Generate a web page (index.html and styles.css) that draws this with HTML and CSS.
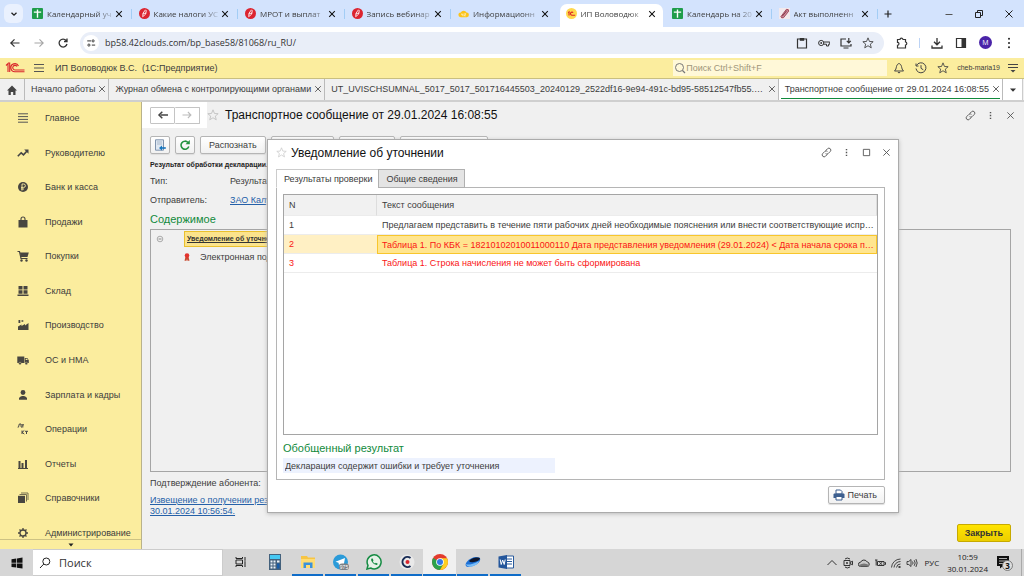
FILE: index.html
```html
<!DOCTYPE html>
<html lang="ru">
<head>
<meta charset="utf-8">
<title>ИП Воловодюк В.С. (1С:Предприятие)</title>
<link rel="stylesheet" href="styles.css">
</head>
<body>
<svg class="defs" aria-hidden="true">
  <symbol id="x" viewBox="0 0 10 10"><path d="M1.500 1.500l7 7M8.500 1.500l-7 7" fill="none" stroke="currentColor"/></symbol>
  <symbol id="star" viewBox="0 0 14 14"><path d="M7 1l1.700 4.200 4.300.3-3.300 2.800 1.100 4.300L7 10.200l-3.800 2.400 1.100-4.300L1 5.500l4.300-.3z" fill="none" stroke="currentColor"/></symbol>
  <symbol id="link" viewBox="0 0 12 12"><path d="M5.200 3.800l1.900-1.900a2 2 0 0 1 3 3L7.800 7.200a2 2 0 0 1-2.800 0M6.800 8.200l-1.900 1.900a2 2 0 0 1-3-3l2.300-2.300a2 2 0 0 1 2.800 0" fill="none" stroke="currentColor"/></symbol>
  <symbol id="dots" viewBox="0 0 10 10"><path d="M4.200 1h1.600v1.600H4.200zM4.200 4.200h1.600v1.600H4.200zM4.200 7.400h1.600V9H4.200z" fill="currentColor"/></symbol>
  <symbol id="sheet" viewBox="0 0 12 12"><rect width="12" height="12" rx="1" fill="#1f9d4b"/><path d="M6 1.500v9M2 4.500h8" stroke="#fff" stroke-width="1.500"/></symbol>
  <symbol id="pen" viewBox="0 0 12 12"><circle cx="6" cy="6" r="6" fill="#dc2430"/><path d="M7 2L4.500 5.500 4 9.500 7 7l1-4zM4 6.500q3-1 4-1" fill="none" stroke="#fff" stroke-width=".9"/></symbol>
</svg>

<header class="tabstrip">
  <button class="tab-search" aria-label="Поиск вкладок"><svg viewBox="0 0 8 8"><path d="M1.500 2.800L4 5.200l2.500-2.400" fill="none" stroke="#1f1f1f" stroke-width="1.300"/></svg></button>
  <div class="browser-tabs">
    <div class="btab"><svg class="fav"><use href="#sheet"/></svg><span>Календарный уч</span><button aria-label="Закрыть"><svg><use href="#x"/></svg></button></div>
    <div class="btab"><svg class="fav"><use href="#pen"/></svg><span>Какие налоги УС</span><button aria-label="Закрыть"><svg><use href="#x"/></svg></button></div>
    <div class="btab"><svg class="fav"><use href="#pen"/></svg><span>МРОТ и выплат</span><button aria-label="Закрыть"><svg><use href="#x"/></svg></button></div>
    <div class="btab"><svg class="fav"><use href="#pen"/></svg><span>Запись вебинар</span><button aria-label="Закрыть"><svg><use href="#x"/></svg></button></div>
    <div class="btab before-active"><svg class="fav" viewBox="0 0 12 12"><path d="M3 10a2.600 2.600 0 0 1 0-5.200A3.500 3.500 0 0 1 9.300 5 2.500 2.500 0 0 1 9.500 10z" fill="#fcc419"/><path d="M4 6v1.500h1.500M5.500 6v3M7 6h1.200v1.300H7v1.300h1.500" fill="none" stroke="#fff" stroke-width=".6"/></svg><span>Информационн</span><button aria-label="Закрыть"><svg><use href="#x"/></svg></button></div>
    <div class="btab active"><svg class="fav" viewBox="0 0 12 12"><circle cx="6" cy="6" r="6" fill="#ffd84d"/><path d="M2.300 5l1-.8v4M7.800 5a1.700 1.700 0 1 0-1.300 2.900H10" fill="none" stroke="#dc2626" stroke-width="1.200"/></svg><span>ИП Воловодюк</span><button aria-label="Закрыть"><svg><use href="#x"/></svg></button></div>
    <div class="btab"><svg class="fav"><use href="#sheet"/></svg><span>Календарь на 20</span><button aria-label="Закрыть"><svg><use href="#x"/></svg></button></div>
    <div class="btab"><svg class="fav" viewBox="0 0 12 12"><rect width="12" height="12" fill="#f3e9ec"/><path d="M2 9.500L8 1.500q3-.5 2.500 2L5 10.500q-2.500 1-3-1z" fill="#cf8b98" stroke="#9f4458"/><path d="M3.500 9l5-6.200" stroke="#7c3042"/></svg><span>Акт выполненн</span><button aria-label="Закрыть"><svg><use href="#x"/></svg></button></div>
  </div>
  <button class="new-tab" aria-label="Новая вкладка"><svg viewBox="0 0 10 10"><path d="M5 1.500v7M1.500 5h7" stroke="#222" stroke-width="1.200"/></svg></button>
  <div class="window-buttons">
    <button aria-label="Свернуть"><svg viewBox="0 0 10 10"><path d="M1.500 5.500h7" stroke="#555"/></svg></button>
    <button aria-label="Развернуть"><svg viewBox="0 0 10 10"><path d="M1.500 3.500h5v5h-5zM3.500 3V1.500h5v5H7" fill="none" stroke="#222"/></svg></button>
    <button aria-label="Закрыть окно"><svg viewBox="0 0 10 10"><path d="M1.500 1.500l7 7m0-7l-7 7" stroke="#222"/></svg></button>
  </div>
</header>

<div class="toolbar">
  <button aria-label="Назад"><svg viewBox="0 0 12 12"><path d="M10.500 6H2m3.500-3.700L1.800 6l3.700 3.700" fill="none" stroke="#333" stroke-width="1.200"/></svg></button>
  <button aria-label="Вперед"><svg viewBox="0 0 12 12"><path d="M1.500 6H10M6.500 2.300L10.200 6 6.500 9.700" fill="none" stroke="#a5a5a5" stroke-width="1.100"/></svg></button>
  <button aria-label="Обновить"><svg viewBox="0 0 12 12"><path d="M10 7a4 4 0 1 1-.8-3.500M10 1.500v3H7" fill="none" stroke="#333" stroke-width="1.300"/></svg></button>
  <div class="address">
    <button class="site" aria-label="О сайте"><svg viewBox="0 0 12 12"><path d="M1.500 3.500H6M7 8.500h4" stroke="#333" stroke-width="1.200"/><circle cx="8.500" cy="3.500" r="1.300" fill="none" stroke="#333" stroke-width="1.100"/><circle cx="3.500" cy="8.500" r="1.300" fill="none" stroke="#333" stroke-width="1.100"/></svg></button>
    <input type="text" aria-label="Адрес" value="bp58.42clouds.com/bp_base58/81068/ru_RU/">
    <button aria-label="Буфер"><svg viewBox="0 0 12 12"><path d="M1.500 2h9v9h-9z" fill="none" stroke="#333" stroke-width="1.200"/><path d="M3.800 1h4.400v2.800H3.800z" fill="#333"/></svg></button>
    <button aria-label="Пароли"><svg viewBox="0 0 12 12"><circle cx="3.200" cy="6" r="2.600" fill="none" stroke="#333"/><circle cx="3.200" cy="6" r=".9" fill="#333"/><path d="M5.800 5h6v2.200H10.600V9H8.500V7.200H5.800" fill="none" stroke="#333"/></svg></button>
    <button aria-label="Установить"><svg viewBox="0 0 12 12"><path d="M6 2H1v7h10V7M3.500 11h5M8.800 1v4.500M6.800 3.800l2 2 2-2" fill="none" stroke="#333" stroke-width="1.200"/></svg></button>
    <button aria-label="Закладка"><svg><use href="#star"/></svg></button>
  </div>
  <div class="browser-actions">
    <button aria-label="Расширения"><svg viewBox="0 0 12 12"><path d="M1.500 2.500H4a1.500 1.300 0 0 1 3 0h2.500V5a1.300 1.500 0 0 1 0 3v3h-8V8.300a1.400 1.400 0 0 0 0-3z" fill="none" stroke="#333" stroke-width="1.200"/></svg></button>
    <span class="sep"></span>
    <button aria-label="Загрузки"><svg viewBox="0 0 12 12"><path d="M6 1v6.500M3 4.800l3 3 3-3M1 8.500V11h10V8.500" fill="none" stroke="#333" stroke-width="1.300"/></svg></button>
    <button aria-label="Панель"><svg viewBox="0 0 12 12"><path d="M1.500 1.500h9v9h-9z" fill="none" stroke="#333" stroke-width="1.200"/><path d="M6.500 1.500h4v9h-4z" fill="#333"/></svg></button>
    <button class="avatar" aria-label="Профиль">M</button>
    <button aria-label="Меню"><svg viewBox="0 0 12 12"><circle cx="6" cy="1.800" r="1" fill="#222"/><circle cx="6" cy="6" r="1" fill="#222"/><circle cx="6" cy="10.200" r="1" fill="#222"/></svg></button>
  </div>
</div>

<div class="app-head">
  <svg class="logo" viewBox="0 0 20 12" aria-label="1С"><path d="M1 3.500L3 1.500v8.500M4.700 10V1H3.500M13.500 4A4 4 0 1 0 10 9.700h9.500M12 4.500a2.300 2.300 0 1 0-2 3.500h9.500" fill="none" stroke="#d9252b" stroke-width="1.100"/></svg>
  <button aria-label="Меню"><svg viewBox="0 0 12 12"><path d="M1 2.500h10M1 6h10M1 9.500h10" stroke="#555"/></svg></button>
  <span class="app-name">ИП Воловодюк В.С.&nbsp; (1С:Предприятие)</span>
  <label class="app-search"><svg viewBox="0 0 12 12"><circle cx="5.500" cy="5.500" r="4" fill="none" stroke="#777"/><path d="M8.500 8.500l2.500 2.500" stroke="#777" stroke-width="1.200"/></svg><input type="search" placeholder="Поиск Ctrl+Shift+F" aria-label="Поиск"></label>
  <button aria-label="Оповещения"><svg viewBox="0 0 12 12"><path d="M1.500 9h9C9 7.500 9 6.500 8.500 4.500 8 2.500 7 1.800 6 1.500 5 1.800 4 2.500 3.500 4.500 3 6.500 3 7.500 1.500 9z" fill="none" stroke="#444"/><path d="M4.500 10h3L6 11.500z" fill="#444"/></svg></button>
  <button aria-label="История"><svg viewBox="0 0 12 12"><path d="M1.500 3.500A5 5 0 1 1 1 6.500M1 1.500v2.500h2.500M6 3.200v3.100l2.300 1.500" fill="none" stroke="#444"/></svg></button>
  <button aria-label="Избранное"><svg><use href="#star"/></svg></button>
  <span class="user">cheb-maria19</span>
  <button aria-label="Сервис"><svg viewBox="0 0 12 12"><path d="M1 2.500h10M1 5.500h10" stroke="#444"/><path d="M3.500 8h5L6 10.500z" fill="#444"/></svg></button>
</div>

<nav class="app-tabs">
  <button class="home" aria-label="Начальная страница"><svg viewBox="0 0 12 12"><path d="M6 1.500l5 5H9.500V11h-2.300V8H4.800v3H2.500V6.500H1z" fill="#444"/></svg></button>
  <div class="atab"><span>Начало работы</span><button aria-label="Закрыть"><svg><use href="#x"/></svg></button></div>
  <div class="atab"><span>Журнал обмена с контролирующими органами</span><button aria-label="Закрыть"><svg><use href="#x"/></svg></button></div>
  <div class="atab long"><span>UT_UVISCHSUMNAL_5017_5017_501716445503_20240129_2522df16-9e94-491c-bd95-58512547fb55.…</span><button aria-label="Закрыть"><svg><use href="#x"/></svg></button></div>
  <div class="atab current"><span>Транспортное сообщение от 29.01.2024 16:08:55</span><button aria-label="Закрыть"><svg><use href="#x"/></svg></button></div>
  <button class="more" aria-label="Все вкладки"><svg viewBox="0 0 8 8"><path d="M1 2.500h6L4 5.800z" fill="#333"/></svg></button>
</nav>

<div class="workspace">
  <nav class="sidebar">
    <ul>
      <li><svg viewBox="0 0 12 12"><path d="M1 1.800h10M1 4.600h10M1 7.400h10M1 10.200h10" stroke="#555"/></svg><a href="#">Главное</a></li>
      <li><svg viewBox="0 0 12 12"><path d="M.8 9.300l3.400-3.500 2.300 2L10 4" fill="none" stroke="#444" stroke-width="1.600"/><path d="M7.200 2.500h4.300v4.300z" fill="#444"/></svg><a href="#">Руководителю</a></li>
      <li><svg viewBox="0 0 12 12"><circle cx="6" cy="6" r="5" fill="#484640"/><path d="M5 9.500V3h1.700a1.700 1.700 0 0 1 0 3.400H4M4 8h3" fill="none" stroke="#fbed9e" stroke-width=".9"/></svg><a href="#">Банк и касса</a></li>
      <li><svg viewBox="0 0 12 12"><path d="M1.500 4h9v7.500h-9z" fill="#484640"/><path d="M4 5.500V3a2 2 0 0 1 4 0v2.500" fill="none" stroke="#484640" stroke-width="1.100"/></svg><a href="#">Продажи</a></li>
      <li><svg viewBox="0 0 12 12"><path d="M.5 1.500h2L4 8.500h6.500" fill="none" stroke="#484640" stroke-width="1.200"/><path d="M2.800 2.500h9L10.500 7H4z" fill="#484640"/><circle cx="4.500" cy="10.500" r="1.200" fill="#484640"/><circle cx="9.500" cy="10.500" r="1.200" fill="#484640"/></svg><a href="#">Покупки</a></li>
      <li><svg viewBox="0 0 12 12"><path d="M1.500 1h4v3.500h-4zM6.500 1h4v3.500h-4zM1.500 5.200h4v3.600h-4zM6.500 5.200h4v3.600h-4zM.5 9.500h11V11H.5z" fill="#484640"/></svg><a href="#">Склад</a></li>
      <li><svg viewBox="0 0 12 12"><path d="M1 11V7.500l3.500-2V7L8 5v1.500L11.500 4v7zM1.500 1h1.800v3H1.500zM4.500 1.200h1.800v1.500H4.500z" fill="#484640"/></svg><a href="#">Производство</a></li>
      <li><svg viewBox="0 0 12 12"><path d="M.3 2.500h7v6.500h-7zM7.800 4h2.500l1.500 2.200V9h-4z" fill="#484640"/><circle cx="3" cy="9.500" r="1.300" fill="#484640" stroke="#fbed9e" stroke-width=".4"/><circle cx="9.300" cy="9.500" r="1.300" fill="#484640" stroke="#fbed9e" stroke-width=".4"/><path d="M8.700 4.800h1.300l.8 1.300H8.700z" fill="#fbed9e"/></svg><a href="#">ОС и НМА</a></li>
      <li><svg viewBox="0 0 12 12"><circle cx="6" cy="3.500" r="2.400" fill="#484640"/><path d="M2 10.800V9q1-1.500 3-2h2q2 .5 3 2v1.800z" fill="#484640"/></svg><a href="#">Зарплата и кадры</a></li>
      <li><svg viewBox="0 0 12 12"><path d="M1 4.500V3.800h.6L2.300 1H4v2.800h.6v.7M4.500 1.800H7M5.800 1.800v2.700M5 7.500V11M7.300 7.500L5 9.300 7.300 11M8 8.300h3M9.500 8.300V11" fill="none" stroke="#444"/></svg><a href="#">Операции</a></li>
      <li><svg viewBox="0 0 12 12"><path d="M1.500 3h2v7h-2zM4.500 5h2v5h-2zM8 2h2v8H8zM1 10h10v1H1z" fill="#484640"/></svg><a href="#">Отчеты</a></li>
      <li><svg viewBox="0 0 12 12"><path d="M1 3.800h7V11H1z" fill="#484640"/><path d="M2.500 2.500h7v7M4 1h7v7" fill="none" stroke="#77704f"/></svg><a href="#">Справочники</a></li>
      <li><svg viewBox="0 0 12 12"><circle cx="6" cy="6" r="3" fill="none" stroke="#484640" stroke-width="1.300"/><path d="M6 1v2M6 9v2M1 6h2M9 6h2M2.500 2.500l1.300 1.300M8.200 8.200l1.300 1.300M9.500 2.500L8.200 3.800M3.800 8.200L2.500 9.500" stroke="#484640" stroke-width="1.300"/></svg><a href="#">Администрирование</a></li>
    </ul>
    <button class="scroll-down" aria-label="Далее"><svg viewBox="0 0 8 8"><path d="M1.500 2.500h5L4 5.500z" fill="#222"/></svg></button>
  </nav>

  <main class="form">
    <div class="form-title">
      <div class="history"><button aria-label="Назад"><svg viewBox="0 0 12 12"><path d="M11 6H3.500" stroke="#444" stroke-width="1.500"/><path d="M5.300 2.800L2 6l3.300 3.200" fill="none" stroke="#444" stroke-width="1.500"/></svg></button><button aria-label="Вперед"><svg viewBox="0 0 12 12"><path d="M1.500 6H10M6.900 3l3 3-3 3" fill="none" stroke="#bbb" stroke-width="1.100"/></svg></button></div>
      <svg class="fav-star"><use href="#star"/></svg>
      <h1>Транспортное сообщение от 29.01.2024 16:08:55</h1>
      <div class="title-actions">
        <button aria-label="Ссылка"><svg><use href="#link"/></svg></button>
        <button aria-label="Еще"><svg><use href="#dots"/></svg></button>
        <button aria-label="Закрыть"><svg><use href="#x"/></svg></button>
      </div>
    </div>
    <div class="form-body">
      <div class="commands">
        <button class="cmd icon" aria-label="Перейти"><svg viewBox="0 0 12 12"><path d="M1.500.8h8v10.400h-8z" fill="#dfe8f2" stroke="#7f93ad"/><path d="M3 3h5M3 5h5" stroke="#a9b8cb"/><path d="M11.800 9H7" stroke="#1675bd" stroke-width="1.600"/><path d="M8 6.500v5L5 9z" fill="#1675bd"/></svg></button>
        <button class="cmd icon" aria-label="Обновить"><svg viewBox="0 0 12 12"><path d="M9.800 7.500a4 4 0 1 1-.8-4" fill="none" stroke="#23933f" stroke-width="1.600"/><path d="M10.800 1v4.200H6.500z" fill="#23933f"/></svg></button>
        <button class="cmd">Распознать</button>
        <span class="cmd blank1"></span><span class="cmd blank2"></span><span class="cmd blank3"></span>
      </div>
      <p class="result">Результат обработки декларации.</p>
      <dl class="props">
        <dt>Тип:</dt><dd>Результат</dd>
        <dt>Отправитель:</dt><dd><a href="#">ЗАО Калуга</a></dd>
      </dl>
      <h2>Содержимое</h2>
      <div class="tree">
        <div class="node selected"><svg class="minus" viewBox="0 0 8 8"><circle cx="4" cy="4" r="2.800" fill="none" stroke="#999" stroke-width=".8"/><path d="M2.500 4h3" stroke="#888"/></svg><span>Уведомление об уточнении</span></div>
        <div class="node child"><svg viewBox="0 0 8 8"><path d="M2.500 4L1.500 7.800h2L4 6l.5 1.800h2L5.500 4z" fill="#c84a30"/><circle cx="4" cy="2.600" r="2.300" fill="#e3342f"/></svg><span>Электронная подпись</span></div>
      </div>
      <p class="confirm">Подтверждение абонента:</p>
      <a class="notice" href="#">Извещение о получении результата<br>30.01.2024 10:56:54.</a>
      <div class="footer"><button class="close-form">Закрыть</button></div>
    </div>
  </main>

  <section class="dialog" role="dialog" aria-labelledby="dlg-title">
    <div class="dialog-head">
      <svg class="fav-star"><use href="#star"/></svg>
      <h2 id="dlg-title">Уведомление об уточнении</h2>
      <div class="title-actions">
        <button aria-label="Ссылка"><svg><use href="#link"/></svg></button>
        <button aria-label="Еще"><svg><use href="#dots"/></svg></button>
        <button aria-label="Развернуть"><svg viewBox="0 0 10 10"><path d="M1.500 1.500h7v7h-7z" fill="none" stroke="currentColor"/></svg></button>
        <button aria-label="Закрыть"><svg><use href="#x"/></svg></button>
      </div>
    </div>
    <div class="page-tabs" role="tablist"><button role="tab" aria-selected="true">Результаты проверки</button><button role="tab" aria-selected="false">Общие сведения</button></div>
    <div class="page">
      <div class="table-box">
        <table>
          <thead><tr><th class="num">N</th><th>Текст сообщения</th></tr></thead>
          <tbody>
            <tr><td>1</td><td>Предлагаем представить в течение пяти рабочих дней необходимые пояснения или внести соответствующие испр…</td></tr>
            <tr class="error picked"><td>2</td><td>Таблица 1. По КБК = 18210102010011000110 Дата представления уведомления (29.01.2024) &lt; Дата начала срока п…</td></tr>
            <tr class="error"><td>3</td><td>Таблица 1. Строка начисления не может быть сформирована</td></tr>
          </tbody>
        </table>
      </div>
      <label class="summary" for="sum">Обобщенный результат</label>
      <input id="sum" type="text" readonly value="Декларация содержит ошибки и требует уточнения">
    </div>
    <div class="dialog-foot"><button class="cmd print"><svg viewBox="0 0 12 12"><path d="M3 1h4.500L9 2.500V5H3z" fill="#fff" stroke="#3d5f8f"/><path d="M1 4.500h10l.5 1V9H.5V5.500z" fill="#3d5f8f"/><path d="M3 7.500h6V11H3z" fill="#fff" stroke="#3d5f8f"/></svg>Печать</button></div>
  </section>
</div>

<footer class="taskbar">
  <button class="start" aria-label="Пуск"><svg viewBox="0 0 12 12"><path d="M.5 2.200l4.800-.7v4.200H.5zM6 1.400L11.500.6v5.100H6zM.5 6.400h4.800v4.200l-4.800-.7zM6 6.400h5.500v5.100L6 10.700z" fill="#111"/></svg></button>
  <label class="task-search"><svg viewBox="0 0 12 12"><circle cx="7.300" cy="4.500" r="3.500" fill="none" stroke="#222"/><path d="M4.800 7L1 11" stroke="#222"/></svg><input type="text" placeholder="Поиск" aria-label="Поиск в системе"></label>
  <div class="apps">
    <button class="tasks" aria-label="Представление задач"><svg class="small" viewBox="0 0 12 12"><path d="M1 1v1.500h6.500V1M1 11V9.500h6.500V11M1 4h6.500v4H1zM10 1v3M10 6v5M9.200 5h1.600" fill="none" stroke="#222"/></svg></button>
    <button aria-label="Калькулятор"><svg viewBox="0 0 16 16"><path d="M2 0h12v16H2z" fill="#44617c"/><path d="M3 1h10v4H3z" fill="#46c8f2"/><path d="M3.500 6.500h2v2h-2zM6.500 6.500h2v2h-2zM3.500 9.500h2v2h-2zM6.500 9.500h2v2h-2zM3.500 12.500h2v2h-2zM6.500 12.500h2v2h-2zM10 6.500h2.500v2H10z" fill="#e9f1f7"/><path d="M10 9.500h2.500v5H10z" fill="#175ca8"/></svg></button>
    <button class="open" aria-label="Проводник"><svg viewBox="0 0 16 16"><path d="M1 2h6l1 1.500h7V14H1z" fill="#f7c544"/><path d="M1 5h14v9H1z" fill="#ffdc73"/><path d="M3.500 14V8.500h9V14H10v-3H6v3z" fill="#3a91dc"/></svg></button>
    <button class="open" aria-label="Telegram"><svg viewBox="0 0 16 16"><circle cx="7.500" cy="8" r="7.500" fill="#2b9bd9"/><path d="M2.500 7.800l9.500-3.900-1.500 8-3-2.200-1.500 1.500-.5-2.500z" fill="#fff"/><rect x="6" y="9.500" width="10" height="6.500" rx="3" fill="#7d8186"/><text x="11" y="14.600" text-anchor="middle" class="badge">975</text></svg></button>
    <button class="open" aria-label="WhatsApp"><svg viewBox="0 0 16 16"><path d="M1 15l1-3.700A7 7 0 1 1 4.700 14z" fill="#e6f1e8" stroke="#158b43" stroke-width="1.500"/><path d="M5.500 4.500q-1.200 1 .5 3.500 2.300 3.300 5 3l.8-1.300-1.900-1-1 .8Q7.200 8.500 6.800 7.200l.7-.8-.8-1.800z" fill="#158b43"/></svg></button>
    <button class="open" aria-label="Контур"><svg viewBox="0 0 16 16"><circle cx="8" cy="8" r="7.500" fill="#e9e9e9"/><path d="M11.500 4A5 5 0 1 0 11.500 12" fill="none" stroke="#182c55" stroke-width="2"/><circle cx="8.500" cy="8" r="2" fill="#d8262e"/></svg></button>
    <button class="open current" aria-label="Chrome"><svg viewBox="0 0 16 16"><circle cx="8" cy="8" r="8" fill="#e33b2e"/><path d="M8 8L1.100 4A8 8 0 0 0 8 16l3.500-6z" fill="#2ca24c"/><path d="M8 8V4.200h7A8 8 0 0 1 8 16l3.400-6z" fill="#fdcf20"/><circle cx="8" cy="8" r="3.800" fill="#fff"/><circle cx="8" cy="8" r="3" fill="#3578e5"/></svg></button>
    <button class="open" aria-label="Облако"><svg viewBox="0 0 16 16"><path d="M.5 11Q1 7 6 4.500T15 4q1 3-3 6T3 13Q1 13 .5 11z" fill="#1d70d6"/><path d="M4 7q2-3 7-3.500 4-.3 4 1-1 2.500-6 3.500-4 .7-5-1z" fill="#10172c"/><path d="M1 10q2 1 6 0t7-3q-1 4-7 5.500-5 1-6-2.500z" fill="#79bdf8"/></svg></button>
    <button class="open" aria-label="Word"><svg viewBox="0 0 16 16"><path d="M8 2h7.500v12H8z" fill="#fff" stroke="#285a9c"/><path d="M9 5h5M9 7.500h5M9 10h5" stroke="#285a9c"/><path d="M.5 2.500L9 1v14L.5 13.500z" fill="#24569b"/><path d="M2.200 5.500l1 5 1.500-4.500 1.500 4.500 1-5" fill="none" stroke="#fff"/></svg></button>
  </div>
  <div class="tray">
    <svg viewBox="0 0 12 12"><path d="M1.500 8L6 3.500 10.500 8" fill="none" stroke="#333"/></svg>
    <svg viewBox="0 0 12 12"><path d="M2 3.500h6v5H2zM8 5.500l2.500-1.300v3.600L8 6.500M3 2Q5 0 8 2M3 10q2 2 5 0" fill="none" stroke="#333"/><circle cx="5" cy="6" r="1" fill="#333"/></svg>
    <svg viewBox="0 0 12 12"><path d="M2.500 9.500a2 2 0 0 1 0-4.200A3.800 3.800 0 0 1 9.300 5 2.300 2.300 0 0 1 9.500 9.500z" fill="#c9c9c9" stroke="#333"/><path d="M1 8q5-3 10 0v1.500H1z" fill="#777"/></svg>
    <svg viewBox="0 0 12 12"><path d="M3.500 4.500H10v4H3.500zM10.500 5.500h1v2h-1M1 3h2.500M2.200 3v5.500M5.500 5.200l2.500 2.600m0-2.600L5.500 7.800" fill="none" stroke="#333"/></svg>
    <svg viewBox="0 0 12 12"><path d="M1.500 10.500A9 9 0 0 1 10.500 2M4 10.500A6.500 6.500 0 0 1 10.500 4.500M6.500 10.500a4 4 0 0 1 4-3.500" fill="none" stroke="#444"/><path d="M8.500 9h2v2h-2z" fill="#444"/></svg>
    <svg viewBox="0 0 12 12"><path d="M1 4.500h1.800L5 2.500v7L2.800 7.500H1zM6.500 4.500q1.200 1.500 0 3M8.200 3.200q2 2.800 0 5.600M9.900 2q2.600 4 0 8" fill="none" stroke="#333" stroke-width=".9"/></svg>
    <span class="lang">РУС</span>
    <time>10:59<br>30.01.2024</time>
    <svg class="note" viewBox="0 0 17 17"><path d="M1 2h12v10H7l-3 2.500V12H1z" fill="#111"/><path d="M3 4.500h8M3 7h8M3 9.500h5" stroke="#d5d5d5" stroke-width=".8"/><circle cx="11.500" cy="11.500" r="5" fill="#ddd" stroke="#666" stroke-width=".8"/><text x="11.500" y="14.500" text-anchor="middle" class="count">3</text></svg>
  </div>
</footer>
</body>
</html>
```
FILE: styles.css
```css
* { box-sizing: border-box; }
body {
  margin: 0;
  height: 100vh;
  display: flex;
  flex-direction: column;
  overflow: hidden;
  background: #f0f0f0;
  color: #3c3c3c;
  font: 9px/12px "Liberation Sans", Arial, sans-serif;
}
.defs { position: absolute; width: 0; height: 0; }
h1, h2, p, dl, dd, ul { margin: 0; padding: 0; font-weight: normal; }
button, input { font: inherit; color: inherit; border: 0; padding: 0; background: none; }
input { outline: 0; min-width: 0; }
button { display: flex; align-items: center; justify-content: center; flex: none; }
svg { width: 12px; height: 12px; flex: none; display: block; }
a { color: #2560a8; }

/* Browser chrome */
.tabstrip {
  display: flex;
  flex: none;
  align-items: center;
  height: 27px;
  background: #d3e3fd;
  font-family: "Open Sans", "Noto Sans", sans-serif;
  font-size: 8px;
}
.tab-search { width: 19px; height: 19px; margin: 0 2px 0 4px; border-radius: 6px; background: #eaf1fe; }
.tab-search svg { width: 8px; height: 8px; }
.browser-tabs { display: flex; flex: 1; align-self: stretch; min-width: 0; }
.btab { flex: 1 1 0; display: flex; align-items: center; min-width: 0; padding: 0 9px 0 7px; position: relative; }
.btab .fav { width: 11px; height: 11px; }
.btab span {
  flex: 1;
  margin: 0 2px 0 4px;
  overflow: hidden;
  white-space: nowrap;
  mask-image: linear-gradient(90deg, #000 75%, transparent 105%);
}
.btab button svg { width: 8px; height: 8px; color: #111; stroke-width: 1.300; }
.btab:not(.active):not(.before-active)::after {
  content: "";
  position: absolute;
  right: 0;
  width: 1px;
  height: 10px;
  background: #a3cdf5;
}
.btab.active { align-self: flex-end; height: 23px; margin: 0 2px; border-radius: 7px 7px 0 0; background: #fff; padding: 0 7px 4px 6px; }
.new-tab { width: 20px; }
.new-tab svg { width: 10px; height: 10px; }
.window-buttons { display: flex; margin-left: 36px; }
.window-buttons button { width: 30px; }
.window-buttons svg { width: 10px; height: 10px; }
.toolbar {
  display: flex;
  flex: none;
  align-items: center;
  height: 31px;
  padding: 0 3px;
  background: #fff;
  font-family: "Open Sans", "Noto Sans", sans-serif;
}
.toolbar > button { width: 24px; }
.toolbar svg { width: 12px; height: 12px; }
.address { display: flex; align-items: center; flex: 1; height: 22px; margin-left: 5px; border-radius: 11px; background: #e9eef8; padding: 0 5px 0 3px; }
.address button { width: 22px; }
.address .site { width: 16px; height: 16px; border-radius: 8px; background: #fff; margin-right: 6px; }
.address .site svg { width: 10px; height: 10px; }
.address input { flex: 1; font-size: 9px; color: #333; }
.browser-actions { display: flex; align-items: center; margin-left: 6px; }
.browser-actions button { width: 24px; }
.browser-actions .sep { width: 1px; height: 10px; margin: 0 5px 0 5px; background: #bcd3f5; }
.browser-actions .avatar { width: 13px; height: 13px; margin: 0 5px 0 6px; border-radius: 50%; background: #4a24a8; color: #fff; font-size: 7px; }

/* Application header */
.app-head {
  display: flex;
  flex: none;
  align-items: center;
  height: 21px;
  padding: 0 0 0 5px;
  background: #fbed9e;
  border-bottom: 1px solid #c9bf80;
}
.app-head .logo { width: 20px; height: 12px; margin-right: 8px; }
.app-name { margin-left: 10px; flex: 1; }
.app-search { display: flex; align-items: center; width: 214px; height: 16px; background: #fff8d8; margin-right: 1px; padding-left: 1px; }
.app-search input { flex: 1; }
.app-search input::placeholder, .task-search input::placeholder { color: #a0967a; opacity: 1; }
.app-search ~ button { width: 22px; color: #444; }
.user { font-size: 7px; margin: 0 2px 0 3px; }
.app-tabs { display: flex; flex: none; height: 23px; border-bottom: 2px solid #cfcfcf; }
.app-tabs .home { width: 25px; border-right: 1px solid #bbb; }
.atab { display: flex; align-items: center; gap: 3px; flex: none; padding: 0 2px 2px 6px; border-right: 1px solid #bbb; white-space: nowrap; }
.atab button svg { width: 8px; height: 8px; }
.atab.long { flex: 1; min-width: 0; }
.atab.long span { flex: 1; }
.atab.current { position: relative; background: #fff; }
.atab.current::after { content: ""; position: absolute; left: 2px; right: 2px; bottom: 1px; height: 1px; background: #118a3c; }
.app-tabs .more { width: 20px; margin-right: 1px; background: #fff; border-right: 1px solid #ccc; }
.more svg { width: 8px; height: 8px; }

/* Section panel */
.workspace { position: relative; flex: 1; min-height: 0; display: grid; grid-template-columns: 142px minmax(0, 1fr); }
.sidebar { display: flex; flex-direction: column; min-height: 0; background: #fbed9e; border-right: 1px solid #b9b28a; }
.sidebar ul { flex: 1; min-height: 0; display: flex; flex-direction: column; justify-content: space-between; list-style: none; padding-top: 10px; }
.sidebar li { display: flex; align-items: center; height: 12px; gap: 16px; padding-left: 17px; }
.sidebar a { color: inherit; text-decoration: none; }
.sidebar .scroll-down { height: 10px; border-top: 1px solid #cdc283; }
.sidebar .scroll-down svg { width: 8px; height: 8px; }

/* Form */
.form { display: flex; flex-direction: column; min-width: 0; }
.form-title { display: flex; flex: none; align-items: center; height: 26px; padding-right: 4px; color: #111; }
.history { display: flex; align-self: stretch; align-items: center; padding: 0 7px 0 8px; background: #fff; }
.history button { width: 25px; height: 17px; border: 1px solid #c4c4c4; border-radius: 1px; }
.history button + button { border-left: 0; }
.fav-star { color: #bfbfbf; }
.form-title h1 { flex: 1; font-size: 12px; line-height: 16px; margin-left: 6px; }
.title-actions { display: flex; color: #555; }
.title-actions button { width: 20px; }
.title-actions svg { width: 9px; height: 9px; }
.title-actions button:first-child svg { width: 11px; height: 11px; }
.form-body { display: flex; flex: 1; min-height: 0; flex-direction: column; align-items: flex-start; padding: 8px 13px 7px 8px; white-space: nowrap; }
.commands { display: flex; gap: 5px; }
.cmd { height: 18px; border: 1px solid #b5b5b5; border-radius: 2px; background: linear-gradient(#fff, #f1f1f1); padding: 0 8px; box-shadow: 0 1px 1px #ddd; }
.cmd.icon { width: 20px; padding: 0; }
.blank1 { width: 63px; }
.blank2 { width: 56px; }
.blank3 { width: 88px; }
.result { font-size: 7px; font-weight: bold; margin-top: 5px; color: #222; }
.props { display: grid; grid-template-columns: 80px auto; row-gap: 7px; margin-top: 4px; }
.form-body h2 { font-size: 11px; line-height: 14px; margin-top: 6px; color: #118a3c; }
.tree { align-self: stretch; flex: 1; margin-top: 3px; border: 1px solid #a5a5a5; padding: 0; }
.node { display: flex; align-items: center; height: 18px; }
.node .minus { width: 8px; height: 8px; margin: 0 20px 0 5px; }
.selected span { width: 300px; height: 16px; border: 1px solid #eac02e; background: #fbe38c; font-size: 7px; line-height: 14px; font-weight: bold; text-decoration: underline; padding-left: 2px; color: #333; }
.child { padding-left: 32px; gap: 9px; }
.child svg { width: 8px; height: 8px; }
.confirm { margin-top: 5px; }
.notice { line-height: 11px; margin-top: 6px; }
.footer { align-self: stretch; display: flex; justify-content: flex-end; margin-top: 7px; }
.close-form { height: 18px; padding: 0 7px; border: 1px solid #c7aa00; border-radius: 2px; background: linear-gradient(#ffe400, #ecce00); font-weight: bold; color: #333; }

/* Dialog over the form */
.dialog {
  position: absolute;
  left: 267px;
  right: 125px;
  top: 37px;
  bottom: 36px;
  display: flex;
  flex-direction: column;
  padding: 0 13px 8px 8px;
  background: #fff;
  border: 1px solid #ababab;
  box-shadow: 0 1px 4px #bbb;
}
.dialog-head { display: flex; align-items: center; height: 25px; color: #111; }
.dialog-head .fav-star { width: 11px; height: 11px; color: #ccc; }
.dialog-head h2 { flex: 1; font-size: 12px; line-height: 14px; margin-left: 4px; }
.dialog .title-actions { margin-right: -11px; }
.page-tabs { display: flex; height: 19px; margin-top: 4px; z-index: 1; }
.page-tabs button { padding: 0 6px 0 7px; border: 1px solid #b0b0b0; background: #e4e4e4; }
.page-tabs button[aria-selected="true"] { background: #fff; border-color: #ccc; border-right: 0; border-bottom-color: #fff; }
.page { flex: 1; min-height: 0; display: flex; flex-direction: column; align-items: flex-start; margin-top: -1px; border: 1px solid #b5b5b5; padding: 6px; }
.table-box { align-self: stretch; flex: 1; min-height: 0; border: 1px solid #a5a5a5; }
table { width: 100%; table-layout: fixed; border-collapse: separate; border-spacing: 0; }
th, td { height: 19px; padding: 0 5px; border-bottom: 1px solid #ececec; text-align: left; font-weight: normal; white-space: nowrap; }
th { height: 21px; background: #f1f1f1; border-right: 1px solid #ddd; }
.num { width: 93px; }
.error { color: #fa1414; }
.picked td { background: #fff0c4; }
.picked td + td { background: #ffe58f; border: 1px solid #f8c62c; padding: 0 4px; }
.summary { color: #118a3c; font-size: 11px; line-height: 14px; margin-top: 6px; }
.page input { width: 272px; height: 15px; margin-top: 3px; padding: 0 2px; background: #edf2fe; }
.dialog-foot { display: flex; justify-content: flex-end; margin-top: 6px; }
.print { gap: 3px; padding: 0 7px 0 4px; }

/* Taskbar */
.taskbar { display: flex; flex: none; height: 27px; background: #d6d6d6; font-family: "Open Sans", "Noto Sans", sans-serif; color: #222; }
.start { width: 33px; }
.task-search { display: flex; align-items: center; width: 190px; background: #fff; border: 1px solid #ccc; border-left: 0; padding-left: 6px; gap: 8px; }
.task-search input { font-size: 11px; flex: 1; }
.task-search input::placeholder { color: #333; }
.apps { display: flex; flex: 1; }
.apps button { width: 33px; border-bottom: 2px solid transparent; }
.apps .tasks { width: 35px; }
.apps svg { width: 16px; height: 16px; }
.apps .small { width: 12px; height: 12px; }
.apps .open { border-image: linear-gradient(90deg, transparent 9%, #0f6cc8 9% 91%, transparent 91%) 2; border-style: solid; border-width: 0 0 2px; }
.apps .current { background: #f0f0f0; border-image: none; border-color: #0f6cc8; }
.badge { font: 5px "Liberation Sans", sans-serif; fill: #fff; }
.count { font: bold 8px "Open Sans", sans-serif; fill: #111; }
.tray { display: flex; align-items: center; gap: 4px; padding-right: 8px; border-right: 1px solid #aaa; margin-right: 2px; font-size: 8px; }
.lang { margin-left: 2px; }
.tray time { text-align: center; margin: 0 4px; }
.tray .note { width: 17px; height: 17px; }
```
